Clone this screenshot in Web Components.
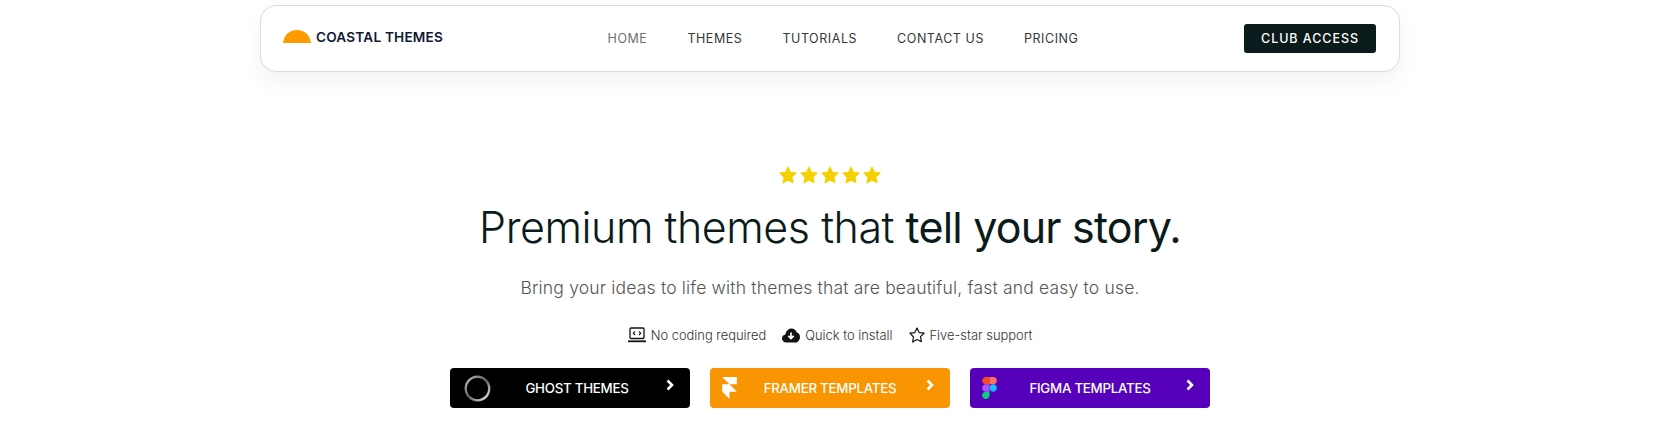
<!DOCTYPE html>
<html lang="en"><head><meta charset="utf-8"><title>Coastal Themes</title>
<style>
html,body{margin:0;padding:0;background:#fff;overflow:hidden}
body{height:427px;font-family:Inter,"Liberation Sans",sans-serif;color:#0b1a1a}
</style></head><body>
<coastal-page>
  <site-nav>
    <nav-link slot="links" current>HOME</nav-link>
    <nav-link slot="links">THEMES</nav-link>
    <nav-link slot="links">TUTORIALS</nav-link>
    <nav-link slot="links">CONTACT US</nav-link>
    <nav-link slot="links">PRICING</nav-link>
  </site-nav>
  <hero-section>
    <feature-item slot="features" icon="laptop">No coding required</feature-item>
    <feature-item slot="features" icon="cloud">Quick to install</feature-item>
    <feature-item slot="features" icon="star">Five-star support</feature-item>
    <cta-button slot="cta" icon="ghost" style="--bg:#000">GHOST THEMES</cta-button>
    <cta-button slot="cta" icon="framer" style="--bg:#f99500">FRAMER TEMPLATES</cta-button>
    <cta-button slot="cta" icon="figma" style="--bg:#5700bb">FIGMA TEMPLATES</cta-button>
  </hero-section>
</coastal-page>
<script>
function def(name, html, setup){
  customElements.define(name, class extends HTMLElement{
    constructor(){super();this.attachShadow({mode:'open'}).innerHTML=html;}
    connectedCallback(){ if(setup) setup(this); }
  });
}
def('coastal-page',`<style>:host{display:flex;flex-direction:column;align-items:center;width:1660px;padding-top:5px}</style><slot></slot>`);

def('site-nav',`<style>
:host{display:flex;align-items:center;box-sizing:border-box;width:1140px;height:67px;padding:0 22px 0 22px;background:#fff;border:1px solid #dcdcdc;border-radius:16px;box-shadow:0 10px 22px rgba(0,0,0,.05)}
.brand{display:flex;align-items:center;gap:5px;width:171px;flex:none;margin-bottom:3px;font:600 13.6px Inter,sans-serif;color:#101a33;letter-spacing:.2px}
.brand svg{margin-top:-2px}
.links{display:flex;gap:40px;flex:1;justify-content:center;margin-right:12px}
.club{flex:none;display:flex;align-items:center;justify-content:center;width:132px;height:29px;margin-right:1px;background:#0b1a1a;color:#fff;border-radius:3px;font:500 12.5px Inter,sans-serif;letter-spacing:.95px}
svg{display:block}
</style>
<div class="brand"><svg width="28" height="13" viewBox="0 0 28 13"><path d="M0 13C1 5 6.500 0 14 0s13 5 14 13z" fill="#ff9a00"/></svg><span>COASTAL THEMES</span></div>
<div class="links"><slot name="links"></slot></div>
<div class="club">CLUB ACCESS</div>`);

def('nav-link',`<style>
:host{display:block;font:400 12.5px Inter,sans-serif;letter-spacing:.55px;color:#333838}
:host([current]){color:#6b7070}
</style><slot></slot>`);

const star='M12 1.500l3.200 6.900 7.500.9-5.500 5.200 1.400 7.500L12 18.800l-6.600 3.700 1.400-7.500L1.300 9.300l7.500-.9z';
def('hero-section',`<style>
:host{display:flex;flex-direction:column;align-items:center;margin-top:94px}
.stars{display:flex;gap:3px;height:18px}
h1{margin:13px 0 0;font:300 43px/60px Inter,sans-serif;color:#0b1a1a;letter-spacing:-.46px;white-space:nowrap}
b{font-weight:370;letter-spacing:-.8px}
p{margin:18px 0 0;font:300 17.5px/26px Inter,sans-serif;color:#555;letter-spacing:.18px}
.features{display:flex;gap:16px;margin-top:24px;height:20px;align-items:center}
.cta{display:flex;gap:20px;margin-top:23px}
</style>
<div class="stars">${[1,2,3,4,5].map(()=>`<svg width="18" height="18" viewBox="0 0 24 24"><path d="${star}" fill="#f5d000" stroke="#f5d000" stroke-width="1.500" stroke-linejoin="round"/></svg>`).join('')}</div>
<h1>Premium themes that <b>tell your story.</b></h1>
<p>Bring your ideas to life with themes that are beautiful, fast and easy to use.</p>
<div class="features"><slot name="features"></slot></div>
<div class="cta"><slot name="cta"></slot></div>`);

const featureIcons={
laptop:`<svg width="18" height="16" viewBox="0 0 18 16" fill="none" stroke="#111" stroke-width="1.300"><rect x="2" y="1" width="14" height="10.500" rx="1"/><path d="M0 14.300h18" stroke-width="1.800"/><path d="M7 4.500L5.300 6.200 7 8M11 4.500l1.700 1.700L11 8" stroke-width="1.100"/></svg>`,
cloud:`<svg width="18" height="15" viewBox="0 0 18 15"><path d="M4.300 14.500C1.900 14.500 0 12.800 0 10.500c0-2 1.500-3.700 3.400-4C4 3 6.500.5 9.500.5c2.600 0 4.700 1.700 5.300 4.100 1.900.5 3.200 2.100 3.200 4.300 0 3-2.200 5.600-4.700 5.600z" fill="#111"/><path d="M9 4.500v5.500M6.300 7.800L9 10.500l2.700-2.700" fill="none" stroke="#fff" stroke-width="1.700"/></svg>`,
star:`<svg width="16" height="16" viewBox="0 0 24 24"><path d="${star}" fill="none" stroke="#111" stroke-width="1.800" stroke-linejoin="round"/></svg>`};
def('feature-item',`<style>
:host{display:flex;align-items:center;gap:5px;font:300 12.9px Inter,sans-serif;color:#333}
#i{display:flex}
</style><span id="i"></span><slot></slot>`,el=>{el.shadowRoot.getElementById('i').innerHTML=featureIcons[el.getAttribute('icon')];});

const ctaIcons={
ghost:`<svg width="27" height="27" viewBox="0 0 29 29" fill="none"><defs><linearGradient id="g" x1="0" y1="0" x2="1" y2="1"><stop offset="0" stop-color="#bbb"/><stop offset=".5" stop-color="#555"/><stop offset="1" stop-color="#f2f2f2"/></linearGradient></defs><circle cx="14.500" cy="14.500" r="12.700" stroke="url(#g)" stroke-width="2.400"/><circle cx="14.300" cy="14.700" r="12" stroke="#fff" stroke-opacity=".35" stroke-width=".7"/></svg>`,
framer:`<svg width="15" height="22" viewBox="0 0 16 24" fill="#fff"><path d="M0 0h16v8H8zM0 8h8l8 8H8v8l-8-8z"/></svg>`,
figma:`<svg width="15" height="22" viewBox="0 0 200 300"><path d="M50 300c27.600 0 50-22.400 50-50v-50H50c-27.600 0-50 22.400-50 50s22.400 50 50 50z" fill="#0acf83"/><path d="M0 150c0-27.600 22.400-50 50-50h50v100H50c-27.600 0-50-22.400-50-50z" fill="#a259ff"/><path d="M0 50C0 22.400 22.400 0 50 0h50v100H50C22.400 100 0 77.600 0 50z" fill="#f24e1e"/><path d="M100 0h50c27.600 0 50 22.400 50 50s-22.400 50-50 50h-50V0z" fill="#ff7262"/><path d="M200 150c0 27.600-22.400 50-50 50s-50-22.400-50-50 22.400-50 50-50 50 22.400 50 50z" fill="#1abcfe"/></svg>`};
def('cta-button',`<style>
:host{display:grid;grid-template-columns:var(--icol,44px) 1fr 44px;align-items:center;box-sizing:border-box;width:240px;height:40px;padding:0;background:var(--bg);color:#fff;border-radius:4px;font:500 13.3px Inter,sans-serif;letter-spacing:-.25px}
#i{display:flex;padding-left:var(--ipad,12px)}
.t{text-align:center;white-space:nowrap}
.a{display:flex;justify-content:flex-end;padding-right:15px;position:relative;top:-3px}
</style><span id="i"></span><span class="t"><slot></slot></span><span class="a"><svg width="9" height="12" viewBox="0 0 9 12" fill="none" stroke="#fff" stroke-width="2.600"><path d="M1.500 1.500L6 6l-4.500 4.500"/></svg></span>`,el=>{
  const k=el.getAttribute('icon');
  el.shadowRoot.getElementById('i').innerHTML=ctaIcons[k];
  if(k==='ghost'){el.style.setProperty('--icol','58px');el.style.setProperty('--ipad','14px');}
});
</script>
</body></html>
